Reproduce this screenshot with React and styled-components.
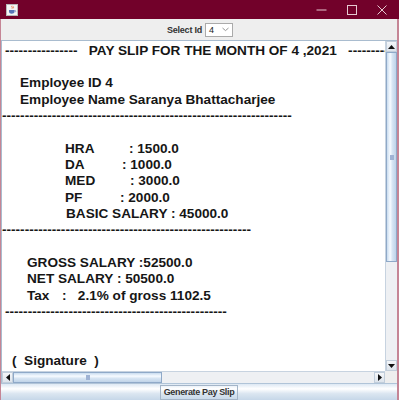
import styled, { createGlobalStyle } from 'styled-components';

const GlobalStyle = createGlobalStyle`
    html, body {
        margin: 0;
        padding: 0;
        width: 399px;
        height: 400px;
        overflow: hidden;
        background: #ffffff;
    }
`;

// pay slip lines, indent in px from the text area edge
const SLIP = [
    { indent: 3, text: '----------------   PAY SLIP FOR THE MONTH OF 4 ,2021   ------------------------' },
    {},
    { indent: 18, text: 'Employee ID 4' },
    { indent: 18, text: 'Employee Name Saranya Bhattacharjee' },
    { indent: 0, text: '-'.repeat(64) },
    {},
    { indent: 63, key: 'HRA', keyWidth: 64, text: ': 1500.0' },
    { indent: 63, key: 'DA', keyWidth: 57, text: ': 1000.0' },
    { indent: 63, key: 'MED', keyWidth: 65, text: ': 3000.0' },
    { indent: 63, key: 'PF', keyWidth: 55, text: ': 2000.0' },
    { indent: 64, text: 'BASIC SALARY : 45000.0' },
    { indent: 0, text: '-'.repeat(55) },
    {},
    { indent: 25, text: 'GROSS SALARY :52500.0' },
    { indent: 25, text: 'NET SALARY : 50500.0' },
    { indent: 25, key: 'Tax', keyWidth: 35, text: ':   2.1% of gross 1102.5' },
    { indent: 3, text: '-'.repeat(49) },
    {},
    {},
    { indent: 10, text: '(  Signature  )' },
];

export default function App () {
    return (
        <>
            <GlobalStyle />
            <Frame>
                <TitleBar>
                    <AppIcon viewBox="0 0 12 12">
                        <rect x="0.5" y="0.5" width="11" height="11" fill="#f4f4f4" stroke="#b8b8b8" />
                        <path d="M6 1.8c-1 1 1 1.6 0 2.8M7.4 2.4c-.6.7.6 1-.1 1.9" stroke="#e0602a" strokeWidth="0.8" fill="none" />
                        <path d="M3 6h5.4v1.6c0 1.4-1.2 2.2-2.7 2.2S3 9 3 7.6z" fill="#5874b8" />
                        <path d="M8.4 6.5h.7c.9 0 .9 1.4 0 1.4h-.8" stroke="#5874b8" strokeWidth="0.6" fill="none" />
                    </AppIcon>
                    <Controls>
                        <svg width="11" height="10" viewBox="0 0 11 10"><path d="M0.5 5h10" stroke="#e6c9d1" strokeWidth="1" /></svg>
                        <svg width="10" height="10" viewBox="0 0 10 10"><rect x="0.5" y="0.5" width="9" height="9" fill="none" stroke="#e6c9d1" strokeWidth="1" /></svg>
                        <svg width="10" height="10" viewBox="0 0 10 10"><path d="M0.5 0.5l9 9M9.5 0.5l-9 9" stroke="#e6c9d1" strokeWidth="1" /></svg>
                    </Controls>
                </TitleBar>
                <Content>
                    <Toolbar>
                        <SmallLabel>Select Id</SmallLabel>
                        <Combo>
                            <span>4</span>
                            <svg width="7" height="5" viewBox="0 0 7 5"><path d="M0.5 1l3 2.6 3-2.6" stroke="#8a8a8a" strokeWidth="0.9" fill="none" /></svg>
                        </Combo>
                    </Toolbar>
                    <ScrollPane>
                        <TextArea>
                            {SLIP.map((line, i) => (
                                <Line key={i} $indent={line.indent || 0}>
                                    {line.key && <Key $w={line.keyWidth}>{line.key}</Key>}
                                    {line.text || ' '}
                                </Line>
                            ))}
                        </TextArea>
                        <VScroll>
                            <ArrowButton>
                                <svg width="7" height="4" viewBox="0 0 7 4"><path d="M0 4L3.5 0 7 4z" fill="#111" /></svg>
                            </ArrowButton>
                            <VTrack>
                                <VThumb>
                                    <Grip />
                                </VThumb>
                            </VTrack>
                            <ArrowButton>
                                <svg width="7" height="4" viewBox="0 0 7 4"><path d="M0 0L3.5 4 7 0z" fill="#111" /></svg>
                            </ArrowButton>
                        </VScroll>
                        <HScroll>
                            <ArrowButton>
                                <svg width="4" height="7" viewBox="0 0 4 7"><path d="M4 0L0 3.5 4 7z" fill="#111" /></svg>
                            </ArrowButton>
                            <HTrack>
                                <HThumb>
                                    <Grip />
                                </HThumb>
                            </HTrack>
                            <ArrowButton>
                                <svg width="4" height="7" viewBox="0 0 4 7"><path d="M0 0L4 3.5 0 7z" fill="#111" /></svg>
                            </ArrowButton>
                        </HScroll>
                        <Corner />
                    </ScrollPane>
                    <GenerateButton>
                        <FocusBox>Generate Pay Slip</FocusBox>
                    </GenerateButton>
                </Content>
            </Frame>
        </>
    );
}

const Frame = styled.div`
    width: 399px;
    height: 400px;
    display: flex;
    flex-direction: column;
    background: #72012a;
    box-sizing: border-box;
`;

const TitleBar = styled.div`
    height: 19px;
    flex: none;
    display: flex;
    align-items: center;
    justify-content: space-between;
    padding-left: 6px;
`;

const AppIcon = styled.svg`
    width: 12px;
    height: 12px;
`;

const Controls = styled.div`
    display: flex;
    align-items: center;
    gap: 20px;
    padding-right: 12px;
`;

const Content = styled.div`
    flex: 1;
    display: flex;
    flex-direction: column;
    min-height: 0;
    border-left: 1px solid #c58595;
    border-right: 2px solid #c58595;
    background: #eeeeee;
`;

const Toolbar = styled.div`
    height: 21px;
    flex: none;
    display: flex;
    align-items: center;
    justify-content: center;
    gap: 3px;
    padding-left: 2px;
    background: #eeeeee;
`;

const SmallLabel = styled.span`
    font-family: "Liberation Sans", Arial, sans-serif;
    font-weight: bold;
    font-size: 9px;
    letter-spacing: -0.2px;
    color: #333333;
`;

const Combo = styled.div`
    width: 28px;
    height: 14px;
    box-sizing: border-box;
    border: 1px solid #aaaaaa;
    background: #ffffff;
    display: flex;
    align-items: center;
    justify-content: space-between;
    padding: 0 3px 0 3px;
    font-family: "Liberation Sans", Arial, sans-serif;
    font-size: 9px;
    color: #222222;
`;

const ScrollPane = styled.div`
    flex: 1;
    min-height: 0;
    display: grid;
    grid-template-columns: 1fr 12px;
    grid-template-rows: 1fr 12px;
    border-top: 1px solid #a9bccf;
    border-left: 1px solid #a9bccf;
    background: #ffffff;
`;

const TextArea = styled.div`
    overflow: hidden;
    padding-top: 1.5px;
    background: #ffffff;
    font-family: "Liberation Sans", Arial, sans-serif;
    font-weight: bold;
    font-size: 13.6px;
    line-height: 16.35px;
    color: #161616;
`;

const Line = styled.div`
    height: 16.35px;
    white-space: pre;
    padding-left: ${(p) => p.$indent}px;
`;

const Key = styled.span`
    display: inline-block;
    width: ${(p) => p.$w}px;
`;

const VScroll = styled.div`
    display: flex;
    flex-direction: column;
    background: #eef0f3;
    border-left: 1px solid #c7d3e0;
`;

const HScroll = styled.div`
    display: flex;
    background: #eef0f3;
    border-top: 1px solid #c7d3e0;
`;

const ArrowButton = styled.div`
    flex: none;
    width: 11px;
    height: 11px;
    display: flex;
    align-items: center;
    justify-content: center;
    background: linear-gradient(#f4f6f9, #dde4ec);
    border: 1px solid #c2cedb;
    box-sizing: border-box;
`;

const VTrack = styled.div`
    flex: 1;
    display: flex;
    flex-direction: column;
    padding-bottom: 98px;
`;

const HTrack = styled.div`
    flex: 1;
    display: flex;
    padding-right: 212px;
`;

const thumb = `
    flex: 1;
    display: flex;
    align-items: center;
    justify-content: center;
    box-sizing: border-box;
    border: 1px solid #8fa9c8;
`;

const VThumb = styled.div`
    ${thumb}
    background: linear-gradient(90deg, #c9dcef 0%, #f7fbff 35%, #d7e5f3 60%, #bfd3e8 100%);
`;

const HThumb = styled.div`
    ${thumb}
    background: linear-gradient(#c9dcef 0%, #f7fbff 35%, #d7e5f3 60%, #bfd3e8 100%);
`;

const Grip = styled.div`
    width: 4px;
    height: 5px;
    background: #9fb3d4;
`;

const Corner = styled.div`
    background: #eeeeee;
`;

const GenerateButton = styled.div`
    height: 16px;
    flex: none;
    display: flex;
    align-items: center;
    justify-content: center;
    border-top: 1px solid #b0c4d8;
    background: linear-gradient(#dde8f3 0%, #ffffff 30%, #dbe6f1 60%, #c6d7e8 100%);
`;

const FocusBox = styled.span`
    font-family: "Liberation Sans", Arial, sans-serif;
    font-weight: bold;
    font-size: 9px;
    letter-spacing: -0.35px;
    color: #333333;
    padding: 1px 3px;
    border: 1px solid #a4b5c8;
    line-height: 11px;
`;
